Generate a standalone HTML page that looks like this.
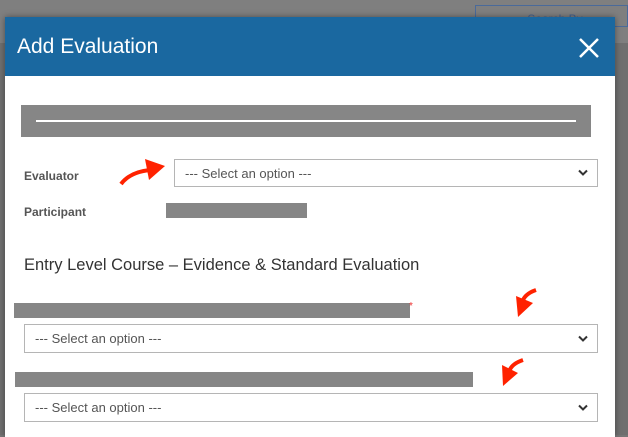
<!DOCTYPE html>
<html><head><style>
body{margin:0;width:628px;height:435px;overflow:hidden;background:#767676;font-family:"Liberation Sans",sans-serif;position:relative}
.a{position:absolute}
.sel{position:absolute;border:1px solid #b5b5b5;background:#fff;box-sizing:border-box;font-size:13px;color:#555;padding-left:10px;display:flex;align-items:center}
.sel svg{position:absolute;right:9px;top:50%;margin-top:-4px}
</style></head><body>
<div class="a" style="left:0;top:0;width:628px;height:43px;background:#7f7f7f"></div>
<div class="a" style="left:475px;top:5px;width:153px;height:22px;border:1px solid #4a6a9a;box-sizing:border-box;color:#44618e;font-size:12px;padding:6px 0 0 40px">-- Search By --</div>
<div class="a" style="left:0;top:43px;width:628px;height:392px;background:#6f6f6f"></div>
<div class="a" style="left:5px;top:17px;width:610px;height:420px;background:#fff;box-shadow:0 0 6px rgba(0,0,0,.4)"></div>
<div class="a" style="left:5px;top:17px;width:610px;height:59px;background:#1a68a0;color:#fff;font-size:21px;line-height:59px;padding-left:12px;box-sizing:border-box">Add Evaluation</div>
<svg class="a" style="left:578px;top:37px" width="22" height="22"><path d="M2 2L20 20M20 2L2 20" stroke="#fff" stroke-width="2.5"/></svg>
<div class="a" style="left:21px;top:105px;width:570px;height:32px;background:#868686"></div>
<div class="a" style="left:36px;top:120px;width:540px;height:2px;background:#fff"></div>
<div class="a" style="left:24px;top:169px;font-size:12px;font-weight:bold;color:#555">Evaluator</div>
<div class="sel" style="left:174px;top:159px;width:424px;height:28px">--- Select an option ---<svg width="10" height="8"><path d="M1 1.5L5 5.5L9 1.5" stroke="#333" stroke-width="2" fill="none"/></svg></div>
<div class="a" style="left:24px;top:205px;font-size:12px;font-weight:bold;color:#555">Participant</div>
<div class="a" style="left:166px;top:203px;width:141px;height:15px;background:#868686"></div>
<div class="a" style="left:24px;top:256px;font-size:16.5px;color:#333">Entry Level Course – Evidence &amp; Standard Evaluation</div>
<div class="a" style="left:14px;top:303px;width:396px;height:15px;background:#868686"></div>
<div class="a" style="left:409px;top:301px;color:#e33;font-size:10px">*</div>
<div class="sel" style="left:24px;top:324px;width:574px;height:29px">--- Select an option ---<svg width="10" height="8"><path d="M1 1.5L5 5.5L9 1.5" stroke="#333" stroke-width="2" fill="none"/></svg></div>
<div class="a" style="left:15px;top:372px;width:458px;height:15px;background:#868686"></div>
<div class="sel" style="left:24px;top:393px;width:574px;height:29px">--- Select an option ---<svg width="10" height="8"><path d="M1 1.5L5 5.5L9 1.5" stroke="#333" stroke-width="2" fill="none"/></svg></div>
<svg class="a" style="left:0;top:0" width="628" height="435">
<path d="M121 184Q130 172 150 170" stroke="#ff2200" stroke-width="4" fill="none"/>
<path d="M145 159L165 166L149 180Z" fill="#ff2200"/>
<path d="M536 290Q524 294 522 303" stroke="#ff2200" stroke-width="4" fill="none"/>
<path d="M516 296L518 317L533 303Z" fill="#ff2200"/>
<path d="M523 360Q511 364 509 372" stroke="#ff2200" stroke-width="4" fill="none"/>
<path d="M502 365L503 386L518 373Z" fill="#ff2200"/>
</svg>
</body></html>
